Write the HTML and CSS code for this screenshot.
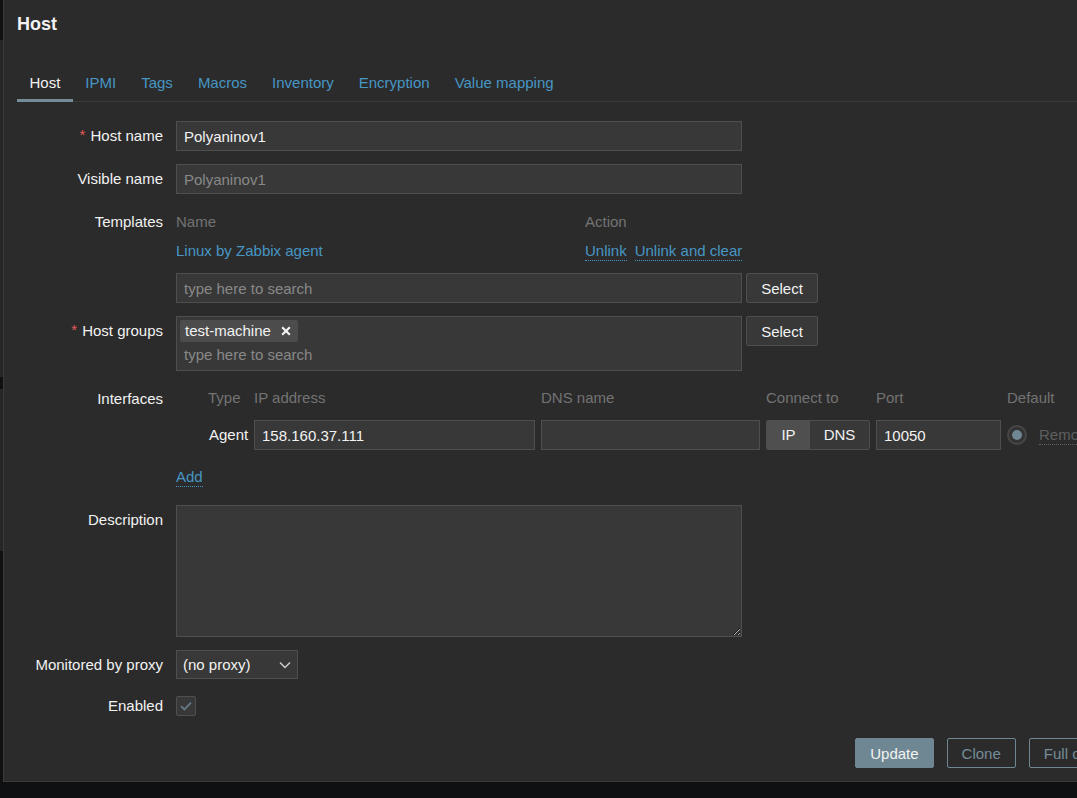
FILE: index.html
```html
<!DOCTYPE html>
<html lang="en">
<head>
<meta charset="utf-8">
<title>Host</title>
<link rel="stylesheet" href="styles.css">
</head>
<body>
<div class="dialog">
  <div class="dialog-head"><h1 class="dialog-title">Host</h1></div>
  <div class="dialog-body">
    <ul class="tabs">
      <li class="tab is-active">Host</li>
      <li class="tab">IPMI</li>
      <li class="tab">Tags</li>
      <li class="tab">Macros</li>
      <li class="tab">Inventory</li>
      <li class="tab">Encryption</li>
      <li class="tab">Value mapping</li>
    </ul>

    <div class="form">
      <div class="row">
        <label class="lbl req">Host name</label>
        <div class="field"><input class="input wide" value="Polyaninov1"></div>
      </div>

      <div class="row">
        <label class="lbl">Visible name</label>
        <div class="field"><input class="input wide" placeholder="Polyaninov1"></div>
      </div>

      <div class="row">
        <label class="lbl">Templates</label>
        <div class="field">
          <div class="tpl-head">
            <span class="col-name">Name</span>
            <span class="col-action">Action</span>
          </div>
          <div class="tpl-row">
            <span class="col-name"><a class="link">Linux by Zabbix agent</a></span>
            <span class="col-action"><a class="link dotted">Unlink</a><a class="link dotted">Unlink and clear</a></span>
          </div>
          <div class="pick">
            <input class="input wide" placeholder="type here to search">
            <button class="btn-alt">Select</button>
          </div>
        </div>
      </div>

      <div class="row">
        <label class="lbl req">Host groups</label>
        <div class="field">
          <div class="pick">
            <div class="multiselect">
              <div class="chips"><span class="chip">test-machine<svg class="chip-x" width="10" height="10" viewBox="0 0 10 10"><path d="M1.2 1.2 L8.8 8.8 M8.8 1.2 L1.2 8.8" stroke="#f2f2f2" stroke-width="2.2" fill="none"/></svg></span></div>
              <div class="ms-search">type here to search</div>
            </div>
            <button class="btn-alt">Select</button>
          </div>
        </div>
      </div>

      <div class="row">
        <label class="lbl">Interfaces</label>
        <div class="field">
          <div class="iface-grid iface-head">
            <span class="c-type">Type</span>
            <span>IP address</span>
            <span>DNS name</span>
            <span>Connect to</span>
            <span>Port</span>
            <span>Default</span>
          </div>
          <div class="iface-grid iface-row">
            <span class="c-type c-agent">Agent</span>
            <input class="input" value="158.160.37.111">
            <input class="input" value="">
            <div class="toggle"><span class="tg is-on">IP</span><span class="tg">DNS</span></div>
            <input class="input" value="10050">
            <div class="def"><span class="radio"><span class="radio-dot"></span></span><a class="link-muted">Remove</a></div>
          </div>
          <div class="add-row"><a class="link dotted">Add</a></div>
        </div>
      </div>

      <div class="row">
        <label class="lbl">Description</label>
        <div class="field"><textarea class="textarea"></textarea></div>
      </div>

      <div class="row">
        <label class="lbl">Monitored by proxy</label>
        <div class="field">
          <div class="select">
            <span>(no proxy)</span>
            <svg class="chev" width="12" height="8" viewBox="0 0 12 8"><path d="M1 1.5 L6 6.5 L11 1.5" fill="none" stroke="#d0d0d0" stroke-width="1.4"/></svg>
          </div>
        </div>
      </div>

      <div class="row row-center">
        <label class="lbl">Enabled</label>
        <div class="field">
          <span class="checkbox">
            <svg width="14" height="12" viewBox="0 0 14 12"><path d="M2 6.2 L5.4 9.4 L12 2.6" fill="none" stroke="#647986" stroke-width="1.8"/></svg>
          </span>
        </div>
      </div>
    </div>

    <div class="footer">
      <button class="btn-main">Update</button>
      <button class="btn-outline">Clone</button>
      <button class="btn-outline">Full clone</button>
    </div>
  </div>
</div>
</body>
</html>
```

FILE: styles.css
```css
html, body {
  margin: 0;
  padding: 0;
  overflow: hidden;
  height: 798px;
}
body {
  background: linear-gradient(to bottom,
    #0e1012 0 40px,
    #262626 40px 377px,
    #0e1012 377px 389px,
    #262626 389px 551px,
    #0e1012 551px 798px);
  font-family: "Liberation Sans", Arial, sans-serif;
  font-size: 15px;
  color: #f2f2f2;
}
.dialog {
  margin-left: 3px;
  width: 1133px;
  background: #2b2b2b;
  border-left: 1px solid #3a3a3a;
  border-bottom: 1px solid #3a3a3a;
  box-sizing: border-box;
}
.dialog-head {
  padding: 14px 13px;
}
.dialog-title {
  margin: 0;
  font-size: 18px;
  line-height: 20px;
  font-weight: bold;
  color: #f2f2f2;
}
.dialog-body {
  padding: 17px 13px 13px 13px;
}
.tabs {
  list-style: none;
  margin: 0;
  padding: 0;
  display: flex;
  border-bottom: 1px solid #383838;
  height: 36px;
}
.tab {
  padding: 0 12.5px;
  line-height: 36px;
  color: #4796c4;
  position: relative;
  white-space: nowrap;
}
.tab.is-active {
  color: #f2f2f2;
}
.tab.is-active::after {
  content: "";
  position: absolute;
  left: 0;
  right: 0;
  bottom: -1px;
  height: 3px;
  background: #768d99;
}
.form {
  padding-top: 19px;
}
.row {
  display: flex;
  gap: 13px;
  margin-bottom: 13px;
}
.row-center {
  align-items: center;
  margin-top: -2px;
}
.lbl {
  width: 146px;
  flex: none;
  text-align: right;
  line-height: 30px;
  color: #f2f2f2;
  white-space: nowrap;
}
.lbl.req::before {
  content: "*";
  color: #e45959;
  margin-right: 5px;
  position: relative;
  top: -1px;
}
.field {
  flex: 1;
  min-width: 0;
}
.input {
  box-sizing: border-box;
  height: 30px;
  background: #383838;
  border: 1px solid #4f4f4f;
  color: #f2f2f2;
  font-family: "Liberation Sans", Arial, sans-serif;
  font-size: 15px;
  padding: 0 7px;
  margin: 0;
  outline: none;
  display: block;
}
.input::placeholder {
  color: #888888;
}
.wide {
  width: 566px;
}
.tpl-head, .tpl-row {
  display: flex;
  width: 566px;
}
.tpl-head {
  height: 29px;
  line-height: 29px;
  color: #737373;
}
.tpl-row {
  height: 30px;
  line-height: 30px;
}
.col-name {
  width: 409px;
  flex: none;
}
.col-action {
  display: flex;
  gap: 8px;
  white-space: nowrap;
}
.link {
  color: #4796c4;
  text-decoration: none;
  cursor: pointer;
  white-space: nowrap;
}
.link.dotted {
  line-height: 18px;
  align-self: center;
  border-bottom: 1px dotted #4796c4;
}
.link-muted {
  color: #5f5f5f;
  line-height: 18px;
  border-bottom: 1px dotted #5f5f5f;
}
.pick {
  display: flex;
  gap: 4px;
  align-items: flex-start;
}
.tpl-row + .pick {
  margin-top: 7px;
}
.btn-alt {
  box-sizing: border-box;
  width: 72px;
  height: 30px;
  background: #383838;
  border: 1px solid #4f4f4f;
  border-radius: 2px;
  color: #f2f2f2;
  font-family: "Liberation Sans", Arial, sans-serif;
  font-size: 15px;
  padding: 0;
}
.multiselect {
  box-sizing: border-box;
  width: 566px;
  height: 55px;
  background: #383838;
  border: 1px solid #4f4f4f;
  padding: 3px 3px 0 3px;
}
.chips {
  display: flex;
}
.chip {
  display: inline-flex;
  align-items: center;
  height: 22px;
  line-height: 20px;
  padding: 0 7px 0 5px;
  background: #4c4c4c;
  border-radius: 2px;
  color: #f2f2f2;
}
.chip-x {
  display: block;
  margin-left: 10px;
}
.ms-search {
  height: 25px;
  line-height: 26px;
  padding-left: 4px;
  color: #888888;
}
.iface-grid {
  display: grid;
  grid-template-columns: 72px 281px 219px 104px 125px auto;
  column-gap: 6px;
}
.iface-head {
  height: 29px;
  line-height: 29px;
  color: #737373;
  margin-top: -1px;
  white-space: nowrap;
}
.c-type {
  padding-left: 32px;
}
.c-agent {
  line-height: 30px;
  padding-left: 33px;
}
.iface-row {
  margin-top: 8px;
  align-items: center;
}
.iface-row .input {
  width: 100%;
}
.toggle {
  display: flex;
  box-sizing: border-box;
  height: 30px;
  border: 1px solid #4f4f4f;
  border-radius: 2px;
  overflow: hidden;
}
.tg {
  line-height: 28px;
  text-align: center;
  background: #383838;
  color: #f2f2f2;
}
.tg:first-child {
  width: 43px;
}
.tg:last-child {
  flex: 1;
}
.tg.is-on {
  background: #4f4f4f;
}
.def {
  display: flex;
  align-items: center;
  gap: 12px;
  white-space: nowrap;
}
.radio {
  box-sizing: border-box;
  width: 20px;
  height: 20px;
  border-radius: 50%;
  border: 2px solid #474747;
  background: #333333;
  display: flex;
  align-items: center;
  justify-content: center;
}
.radio-dot {
  width: 10px;
  height: 10px;
  border-radius: 50%;
  background: #6f8793;
}
.add-row {
  display: flex;
  height: 30px;
  margin-top: 12px;
}
.textarea {
  box-sizing: border-box;
  display: block;
  width: 566px;
  height: 132px;
  background: #383838;
  border: 1px solid #4f4f4f;
  color: #f2f2f2;
  margin: 0;
  padding: 4px 7px;
  resize: vertical;
  color-scheme: dark;
  outline: none;
  font-family: "Liberation Sans", Arial, sans-serif;
  font-size: 15px;
}
.select {
  box-sizing: border-box;
  width: 122px;
  height: 29px;
  background: #383838;
  border: 1px solid #4f4f4f;
  display: flex;
  align-items: center;
  justify-content: space-between;
  padding: 0 6px 0 6px;
  color: #f2f2f2;
}
.chev {
  display: block;
}
.checkbox {
  box-sizing: border-box;
  width: 20px;
  height: 20px;
  background: #383838;
  border: 1px solid #4f4f4f;
  border-radius: 2px;
  display: flex;
  align-items: center;
  justify-content: center;
}
.footer {
  display: flex;
  justify-content: flex-end;
  gap: 13px;
  margin-top: 17px;
}
.btn-main, .btn-outline {
  box-sizing: border-box;
  height: 30px;
  padding: 0 14px;
  border-radius: 2px;
  font-family: "Liberation Sans", Arial, sans-serif;
  font-size: 15px;
  white-space: nowrap;
}
.btn-main {
  background: #6f8793;
  border: 1px solid #6f8793;
  color: #f2f2f2;
}
.btn-outline {
  background: transparent;
  border: 1px solid #6f8793;
  color: #768d99;
}
```
